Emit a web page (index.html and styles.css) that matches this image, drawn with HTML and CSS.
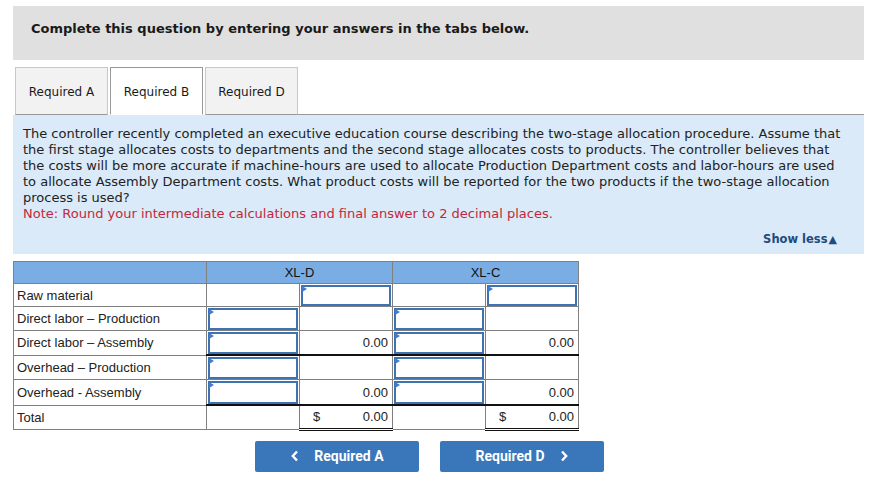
FILE: index.html
```html
<!DOCTYPE html>
<html>
<head>
<meta charset="utf-8">
<link rel="stylesheet" href="styles.css">
</head>
<body>
<div class="page">
  <div class="banner">Complete this question by entering your answers in the tabs below.</div>
  <div class="tabs">
    <div class="tab">Required A</div>
    <div class="tab active">Required B</div>
    <div class="tab">Required D</div>
    <div class="tab-fill"></div>
  </div>
  <div class="panel">
    <p class="question">The controller recently completed an executive education course describing the two-stage allocation procedure. Assume that the first stage allocates costs to departments and the second stage allocates costs to products. The controller believes that the costs will be more accurate if machine-hours are used to allocate Production Department costs and labor-hours are used to allocate Assembly Department costs. What product costs will be reported for the two products if the two-stage allocation process is used?</p>
    <p class="note">Note: Round your intermediate calculations and final answer to 2 decimal places.</p>
    <div class="showless">Show less<span class="tri">&#9650;</span></div>
  </div>
  <table class="grid">
    <colgroup>
      <col class="c-label"><col class="c-a"><col class="c-b"><col class="c-a"><col class="c-b">
    </colgroup>
    <thead>
      <tr class="r-head"><th></th><th colspan="2">XL-D</th><th colspan="2">XL-C</th></tr>
    </thead>
    <tbody>
      <tr class="r1">
        <td class="lbl">Raw material</td>
        <td></td>
        <td class="in"><div class="box"></div></td>
        <td></td>
        <td class="in"><div class="box"></div></td>
      </tr>
      <tr class="r2">
        <td class="lbl">Direct labor – Production</td>
        <td class="in"><div class="box"></div></td>
        <td></td>
        <td class="in"><div class="box"></div></td>
        <td></td>
      </tr>
      <tr class="r3 sub">
        <td class="lbl">Direct labor – Assembly</td>
        <td class="in"><div class="box"></div></td>
        <td class="num">0.00</td>
        <td class="in"><div class="box"></div></td>
        <td class="num">0.00</td>
      </tr>
      <tr class="r4">
        <td class="lbl">Overhead – Production</td>
        <td class="in"><div class="box"></div></td>
        <td></td>
        <td class="in"><div class="box"></div></td>
        <td></td>
      </tr>
      <tr class="r5">
        <td class="lbl">Overhead - Assembly</td>
        <td class="in"><div class="box"></div></td>
        <td class="num">0.00</td>
        <td class="in"><div class="box"></div></td>
        <td class="num">0.00</td>
      </tr>
      <tr class="r6 total">
        <td class="lbl">Total</td>
        <td></td>
        <td class="num dbl"><span class="cur">$</span>0.00</td>
        <td></td>
        <td class="num dbl"><span class="cur">$</span>0.00</td>
      </tr>
    </tbody>
  </table>
  <div class="nav">
    <button class="btn"><svg class="chev" width="10" height="12" viewBox="0 0 10 12"><path d="M7 1.5 L2.8 6 L7 10.5" fill="none" stroke="#fff" stroke-width="2.4"/></svg><span class="btn-text">Required A</span></button>
    <button class="btn"><span class="btn-text">Required D</span><svg class="chev" width="10" height="12" viewBox="0 0 10 12"><path d="M3 1.5 L7.2 6 L3 10.5" fill="none" stroke="#fff" stroke-width="2.4"/></svg></button>
  </div>
</div>
</body>
</html>
```
FILE: styles.css
```css
* { box-sizing: border-box; }
html, body { margin: 0; padding: 0; background: #fff; }
body { font-family: "DejaVu Sans", Verdana, sans-serif; color: #222; }
.page { width: 875px; padding: 6px 11px 0 13px; }

.banner {
  background: #e0e0e0;
  height: 54px;
  padding: 15px 0 0 18px;
  font-weight: bold;
  font-size: 13px;
  color: #1a1a1a;
}

.tabs {
  display: flex;
  margin-top: 7px;
  height: 48px;
  align-items: stretch;
}
.tab {
  width: 93px;
  margin-right: 2px;
  background: #f2f2f2;
  border: 1px solid #c8c8c8;
  border-bottom: 1px solid #999;
  font-size: 12px;
  color: #1a1a1a;
  display: flex;
  align-items: center;
  justify-content: center;
  padding-top: 1px;
}
.tab:first-child { margin-left: 2px; }
.tab.active {
  background: #fff;
  border: 1px solid #999;
  border-bottom: 1px solid #fff;
}
.tab-fill { flex: 1; border-bottom: 1px solid #999; margin-left: -2px; }

.panel {
  background: #daeaf8;
  height: 139px;
  padding: 11px 19px 0 10px;
  font-size: 13px;
  line-height: 16px;
}
.question { margin: 0; color: #222; }
.note { margin: 0; color: #c4273a; }
.showless {
  margin-top: 9px;
  text-align: right;
  padding-right: 8px;
  font-size: 11.5px;
  font-weight: bold;
  color: #1f4b7f;
}
.tri { font-size: 11px; margin-left: 1px; }

.grid {
  margin-top: 7px;
  border-collapse: collapse;
  font-family: "Liberation Sans", Arial, sans-serif;
  font-size: 13px;
  color: #222;
  table-layout: fixed;
  width: 565px;
}
.c-label { width: 193px; }
.c-a { width: 93px; }
.c-b { width: 93px; }
.grid th, .grid td {
  border: 1px solid #808080;
  padding: 0;
}
.grid th {
  background: #79ade4;
  font-weight: normal;
  height: 22px;
  color: #111;
  font-size: 13px;
}
.r1 td { height: 23px; }
.r2 td { height: 24px; }
.r3 td { height: 24px; }
.r4 td { height: 24px; }
.r5 td { height: 25px; }
.r6 td { height: 24px; }
.lbl { padding-left: 3px !important; }
.num { text-align: right; padding-right: 4px !important; }
.cur { float: left; padding-left: 13px; }
.sub td:not(.lbl) { border-bottom: 2px solid #111; }
.total td:not(.lbl) { border-top: 2px solid #111; }
.total td.dbl { border-bottom: 3px double #111; }

.in { padding: 1px 0 0 1px !important; vertical-align: top; }
.box {
  position: relative;
  border: 2px solid #3f72b0;
  margin-right: 1px;
}
.r1 .box { height: 21px; }
.r2 .box { height: 22px; }
.r3 .box { height: 22px; }
.r4 .box { height: 22px; }
.r5 .box { height: 23px; }
.box::before {
  content: "";
  position: absolute;
  left: -1px; top: -1px;
  border-left: 5px solid #3f7bd0;
  border-top: 3px solid transparent;
  border-bottom: 3px solid transparent;
}

.nav {
  display: flex;
  gap: 21px;
  margin-top: 10px;
  padding-left: 242px;
}
.btn {
  width: 164px;
  height: 31px;
  background: #3a76ba;
  border: none;
  border-radius: 2px;
  color: #fff;
  font-family: Roboto, "Liberation Sans", sans-serif;
  font-weight: bold;
  font-size: 14px;
  display: flex;
  align-items: center;
  justify-content: center;
  padding: 0;
}
.chev { display: block; }
.btn .chev:first-child { margin-right: 14px; }
.btn .chev:last-child { margin-left: 14px; }
```
